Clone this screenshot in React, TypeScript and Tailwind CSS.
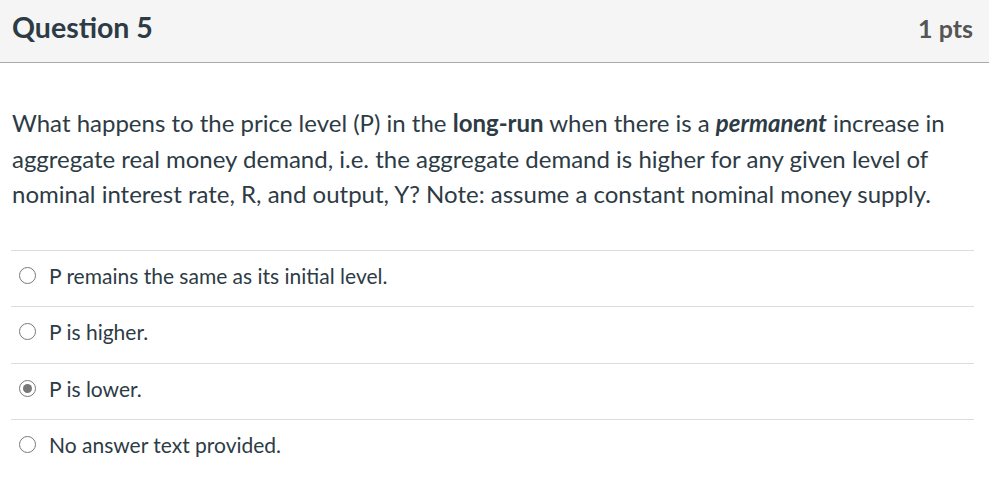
import React from 'react';

const answers = [
  { text: 'P remains the same as its initial level.', checked: false },
  { text: 'P is higher.', checked: false },
  { text: 'P is lower.', checked: true },
  { text: 'No answer text provided.', checked: false },
];

function Radio({ checked }: { checked: boolean }) {
  return (
    <span className="flex h-[17px] w-[17px] shrink-0 items-center justify-center rounded-full border-[1.5px] border-[#777] bg-white">
      {checked && <span className="h-[9px] w-[9px] rounded-full bg-[#777]" />}
    </span>
  );
}

export default function App() {
  return (
    <div className="min-h-[503px] w-[989px] bg-white text-[#2d3b45] [font-family:Lato,'Liberation_Sans',sans-serif]">
      {/* ヘッダー */}
      <div className="flex h-[63px] items-start justify-between border-b border-[#aaa] bg-[#f5f5f5] pl-3 pr-4 pt-[13px]">
        <h2 className="text-[28.5px] font-bold leading-none">Question 5</h2>
        <div className="pt-[3px] text-[25px] font-bold leading-none text-[#555]">1 pts</div>
      </div>

      {/* 問題文 */}
      <div className="mt-[42px] pl-3 pr-4 text-[24px] leading-[35.5px]">
        What happens to the price level (P) in the <strong>long-run</strong> when there is a{' '}
        <strong>
          <em>permanent</em>
        </strong>{' '}
        increase in aggregate real money demand, i.e. the aggregate demand is higher for any given level of
        nominal interest rate, R, and output, Y? Note: assume a constant nominal money supply.
      </div>

      {/* 選択肢 */}
      <div className="ml-[11px] mr-[15px] mt-[38px]">
        {answers.map((a, i) => (
          <div key={i} className="flex h-[56.5px] items-center gap-[13px] border-t border-[#ddd] pb-[6px] pl-[8px] text-[21px]">
            <Radio checked={a.checked} />
            <span>{a.text}</span>
          </div>
        ))}
      </div>
    </div>
  );
}
